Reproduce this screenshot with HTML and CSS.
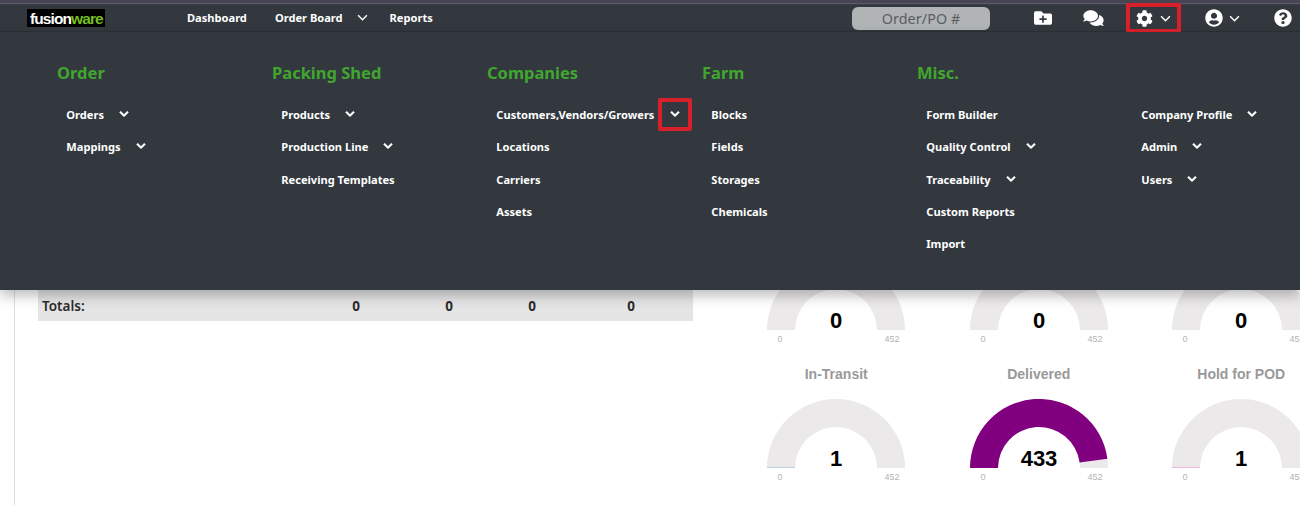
FILE: index.html
```html
<!DOCTYPE html>
<html lang="en">
<head>
<meta charset="utf-8">
<title>Fusionware</title>
<link rel="stylesheet" href="styles.css">
</head>
<body>
<svg class="defs" width="0" height="0" aria-hidden="true">
  <symbol id="chev" viewBox="0 0 448 512"><path d="M207.029 381.476L12.686 187.132c-9.373-9.373-9.373-24.569 0-33.941l22.667-22.667c9.357-9.357 24.522-9.375 33.901-.04L224 284.505l154.745-154.021c9.379-9.335 24.544-9.317 33.901.04l22.667 22.667c9.373 9.373 9.373 24.569 0 33.941L240.971 381.476c-9.373 9.372-24.569 9.372-33.942 0z"/></symbol>
  <symbol id="thin" viewBox="0 0 12 8"><path d="M1 1.500l5 5 5-5" fill="none" stroke="currentColor" stroke-width="1.700"/></symbol>
  <symbol id="cog" viewBox="0 0 512 512"><path d="M487.4 315.7l-42.6-24.6c4.3-23.2 4.3-47 0-70.2l42.6-24.6c4.9-2.8 7.1-8.6 5.5-14-11.1-35.6-30-67.8-54.7-94.6-3.8-4.1-10-5.1-14.8-2.3L380.8 110c-17.9-15.4-38.5-27.3-60.8-35.1V25.8c0-5.6-3.9-10.5-9.4-11.7-36.7-8.2-74.3-7.8-109.2 0-5.5 1.2-9.4 6.1-9.4 11.7V75c-22.2 7.9-42.8 19.8-60.8 35.1L88.7 85.5c-4.9-2.8-11-1.9-14.8 2.3-24.7 26.7-43.6 58.9-54.7 94.6-1.7 5.4.6 11.2 5.5 14L67.3 221c-4.3 23.2-4.3 47 0 70.2l-42.6 24.6c-4.9 2.8-7.1 8.6-5.5 14 11.1 35.6 30 67.8 54.7 94.6 3.8 4.1 10 5.1 14.8 2.3l42.6-24.6c17.9 15.4 38.5 27.3 60.8 35.1v49.2c0 5.6 3.9 10.5 9.4 11.7 36.7 8.2 74.3 7.8 109.2 0 5.5-1.2 9.4-6.1 9.4-11.7v-49.2c22.2-7.9 42.8-19.8 60.8-35.1l42.6 24.6c4.9 2.8 11 1.9 14.8-2.3 24.7-26.7 43.6-58.9 54.7-94.6 1.5-5.5-.7-11.3-5.6-14.1zM256 336c-44.1 0-80-35.9-80-80s35.9-80 80-80 80 35.9 80 80-35.9 80-80 80z"/></symbol>
</svg>

<header class="topbar">
  <div class="logo">fusion<span class="logo-accent">ware</span></div>
  <nav class="mainnav">
    <a class="navlink nav-dash">Dashboard</a>
    <a class="navlink nav-board">Order Board<svg class="thin nav-board-chev"><use href="#thin"/></svg></a>
    <a class="navlink">Reports</a>
  </nav>
  <div class="search">Order/PO #</div>
  <div class="tools">
    <svg class="tool tool-folder" viewBox="0 0 512 512"><path d="M464,128H272L208,64H48A48,48,0,0,0,0,112V400a48,48,0,0,0,48,48H464a48,48,0,0,0,48-48V176A48,48,0,0,0,464,128ZM359.5,296a16,16,0,0,1-16,16h-64v64a16,16,0,0,1-16,16h-16a16,16,0,0,1-16-16V312h-64a16,16,0,0,1-16-16V280a16,16,0,0,1,16-16h64V200a16,16,0,0,1,16-16h16a16,16,0,0,1,16,16v64h64a16,16,0,0,1,16,16Z"/></svg>
    <svg class="tool tool-comments" viewBox="0 0 576 512"><path d="M416 192c0-88.4-93.1-160-208-160S0 103.6 0 192c0 34.3 14.1 65.9 38 92-13.4 30.2-35.5 54.2-35.8 54.5-2.2 2.3-2.8 5.7-1.5 8.7S4.8 352 8 352c36.6 0 66.9-12.3 88.7-25 32.2 15.7 70.3 25 111.3 25 114.9 0 208-71.6 208-160zm122 220c23.9-26 38-57.7 38-92 0-66.9-53.5-124.2-129.3-148.1.9 6.6 1.3 13.3 1.3 20.1 0 105.9-107.7 192-240 192-10.8 0-21.3-.8-31.7-1.9C207.8 439.6 281.8 480 368 480c41 0 79.1-9.2 111.3-25 21.8 12.7 52.1 25 88.7 25 3.2 0 6.1-1.9 7.3-4.8 1.3-2.9.7-6.3-1.5-8.7-.3-.3-22.4-24.2-35.8-54.5z"/></svg>
    <div class="tool-settings">
      <svg class="tool tool-cog"><use href="#cog"/></svg>
      <svg class="thin"><use href="#thin"/></svg>
    </div>
    <div class="tool-user">
      <svg class="tool tool-usericon" viewBox="0 0 496 512"><path d="M248 8C111 8 0 119 0 256s111 248 248 248 248-111 248-248S385 8 248 8zm0 96c48.6 0 88 39.4 88 88s-39.4 88-88 88-88-39.4-88-88 39.4-88 88-88zm0 344c-58.7 0-111.3-26.6-146.5-68.2 18.8-35.4 55.6-59.8 98.5-59.8 2.4 0 4.8.4 7.1 1.1 13 4.2 26.6 6.9 40.9 6.9 14.3 0 28-2.7 40.9-6.9 2.3-.7 4.7-1.1 7.1-1.1 42.9 0 79.7 24.4 98.5 59.8C359.3 421.4 306.7 448 248 448z"/></svg>
      <svg class="thin"><use href="#thin"/></svg>
    </div>
    <svg class="tool tool-help" viewBox="0 0 512 512"><path d="M504 256c0 136.997-111.043 248-248 248S8 392.997 8 256C8 119.083 119.043 8 256 8s248 111.083 248 248zM262.655 90c-54.497 0-89.255 22.957-116.549 63.758-3.536 5.286-2.353 12.415 2.715 16.258l34.699 26.31c5.205 3.947 12.621 3.008 16.665-2.122 17.864-22.658 30.113-35.797 57.303-35.797 20.429 0 45.698 13.148 45.698 32.958 0 14.976-12.363 22.667-32.534 33.976C247.128 238.528 216 254.941 216 296v4c0 6.627 5.373 12 12 12h56c6.627 0 12-5.373 12-12v-1.333c0-28.462 83.186-29.647 83.186-106.667 0-58.002-60.165-102-116.531-102zM256 338c-25.365 0-46 20.635-46 46 0 25.364 20.635 46 46 46s46-20.636 46-46c0-25.365-20.635-46-46-46z"/></svg>
  </div>
</header>

<section class="megamenu">
  <div class="menucol">
    <h2>Order</h2>
    <ul>
      <li>Orders<svg class="chev"><use href="#chev"/></svg></li>
      <li>Mappings<svg class="chev"><use href="#chev"/></svg></li>
    </ul>
  </div>
  <div class="menucol">
    <h2>Packing Shed</h2>
    <ul>
      <li>Products<svg class="chev"><use href="#chev"/></svg></li>
      <li>Production Line<svg class="chev"><use href="#chev"/></svg></li>
      <li>Receiving Templates</li>
    </ul>
  </div>
  <div class="menucol">
    <h2>Companies</h2>
    <ul>
      <li>Customers,Vendors/Growers<span class="redbox"><svg class="chev chev-boxed"><use href="#chev"/></svg></span></li>
      <li>Locations</li>
      <li>Carriers</li>
      <li>Assets</li>
    </ul>
  </div>
  <div class="menucol">
    <h2>Farm</h2>
    <ul>
      <li>Blocks</li>
      <li>Fields</li>
      <li>Storages</li>
      <li>Chemicals</li>
    </ul>
  </div>
  <div class="menucol">
    <h2>Misc.</h2>
    <ul>
      <li>Form Builder</li>
      <li>Quality Control<svg class="chev"><use href="#chev"/></svg></li>
      <li>Traceability<svg class="chev"><use href="#chev"/></svg></li>
      <li>Custom Reports</li>
      <li>Import</li>
    </ul>
  </div>
  <div class="menucol">
    <h2 class="blank">&nbsp;</h2>
    <ul>
      <li>Company Profile<svg class="chev"><use href="#chev"/></svg></li>
      <li>Admin<svg class="chev"><use href="#chev"/></svg></li>
      <li>Users<svg class="chev"><use href="#chev"/></svg></li>
    </ul>
  </div>
</section>

<main class="content">
  <section class="leftpanel">
    <div class="totals">
      <span class="totals-label">Totals:</span>
      <span class="totals-num n1">0</span>
      <span class="totals-num n2">0</span>
      <span class="totals-num n3">0</span>
      <span class="totals-num n4">0</span>
    </div>
  </section>
  <section class="gauges">
    <div class="gauge">
      <div class="gauge-title">&nbsp;</div>
      <svg class="gauge-svg" viewBox="0 0 140 85"><path class="arc" d="M1 69a69 69 0 0 1 138 0h-28a41 41 0 0 0-82 0z"/><text class="val" x="70" y="67">0</text><text class="lim" x="14" y="81">0</text><text class="lim" x="126" y="81">452</text></svg>
    </div>
    <div class="gauge">
      <div class="gauge-title">&nbsp;</div>
      <svg class="gauge-svg" viewBox="0 0 140 85"><path class="arc" d="M1 69a69 69 0 0 1 138 0h-28a41 41 0 0 0-82 0z"/><text class="val" x="70" y="67">0</text><text class="lim" x="14" y="81">0</text><text class="lim" x="126" y="81">452</text></svg>
    </div>
    <div class="gauge">
      <div class="gauge-title">&nbsp;</div>
      <svg class="gauge-svg" viewBox="0 0 140 85"><path class="arc" d="M1 69a69 69 0 0 1 138 0h-28a41 41 0 0 0-82 0z"/><text class="val" x="70" y="67">0</text><text class="lim" x="14" y="81">0</text><text class="lim" x="126" y="81">452</text></svg>
    </div>
    <div class="gauge">
      <div class="gauge-title">In-Transit</div>
      <svg class="gauge-svg" viewBox="0 0 140 85"><path class="arc" d="M1 69a69 69 0 0 1 138 0h-28a41 41 0 0 0-82 0z"/><path class="sliver-blue" d="M1 69h28v-.7h-28z"/><text class="val" x="70" y="67">1</text><text class="lim" x="14" y="81">0</text><text class="lim" x="126" y="81">452</text></svg>
    </div>
    <div class="gauge">
      <div class="gauge-title">Delivered</div>
      <svg class="gauge-svg" viewBox="0 0 140 85"><path class="arc" d="M1 69a69 69 0 0 1 138 0h-28a41 41 0 0 0-82 0z"/><path class="arc-purple" d="M1 69a69 69 0 0 1 137.400-9.130l-27.760 3.710a41 41 0 0 0-81.640 5.420z"/><text class="val" x="70" y="67">433</text><text class="lim" x="14" y="81">0</text><text class="lim" x="126" y="81">452</text></svg>
    </div>
    <div class="gauge">
      <div class="gauge-title">Hold for POD</div>
      <svg class="gauge-svg" viewBox="0 0 140 85"><path class="arc" d="M1 69a69 69 0 0 1 138 0h-28a41 41 0 0 0-82 0z"/><path class="sliver-pink" d="M1 69h28v-.8h-28z"/><text class="val" x="70" y="67">1</text><text class="lim" x="14" y="81">0</text><text class="lim" x="126" y="81">452</text></svg>
    </div>
  </section>
</main>
</body>
</html>
```

FILE: styles.css
```css
* { box-sizing: border-box; }
html, body { margin: 0; padding: 0; }
body {
  width: 1300px;
  height: 505px;
  overflow: hidden;
  background: #fff;
  font-family: "Noto Sans", "Open Sans", sans-serif;
  position: relative;
}
.defs { position: absolute; }

.topbar {
  height: 32px;
  background: linear-gradient(#474554 0 3px, #5c5a68 3px 4px, #3a3d45 4px 5px, #32383e 5px);
  padding-top: 5px;
  border-bottom: 1px solid #2b3035;
  display: flex;
  align-items: center;
  color: #fff;
  padding-left: 27px;
  position: relative;
}
.logo {
  width: 78px;
  height: 18px;
  background: #000;
  color: #fff;
  font-family: "Liberation Sans", sans-serif;
  font-weight: 700;
  font-size: 15.500px;
  line-height: 19px;
  letter-spacing: -0.900px;
  padding-left: 3px;
  white-space: nowrap;
}
.logo-accent { color: #76bc21; }
.mainnav {
  display: flex;
  align-items: center;
  margin: -2px 0 0 82px;
  width: 665px;
}
.navlink {
  font-size: 11.100px;
  font-weight: 700;
  color: #fff;
  display: flex;
  align-items: center;
  white-space: nowrap;
}
.nav-dash { margin-right: 28px; }
.nav-board { margin-right: 22px; }
.nav-board-chev { margin-left: 14px; }
.thin { width: 11px; height: 7px; color: #fff; display: block; flex: none; }
.search {
  width: 138px;
  height: 23px;
  background: #b0b4b5;
  border-radius: 6px;
  color: #595d60;
  font-size: 14.300px;
  letter-spacing: 0.100px;
  line-height: 23px;
  text-align: center;
}
.tools {
  display: flex;
  align-items: center;
  margin-left: 44px;
}
.tool { fill: #fff; display: block; flex: none; }
.tool-folder { width: 18px; height: 18px; margin-right: 31px; }
.tool-comments { width: 21px; height: 18px; margin-right: 22px; }
.tool-settings {
  width: 55px;
  height: 30px;
  border: 4px solid #d8202a;
  border-radius: 1px;
  display: flex;
  align-items: center;
  gap: 7px;
  padding-left: 6px;
  margin-right: 24px;
}
.tool-cog { width: 17px; height: 17px; }
.tool-user {
  display: flex;
  align-items: center;
  gap: 6px;
  margin-right: 34px;
}
.tool-usericon { width: 18px; height: 18px; }
.tool-help { width: 18px; height: 18px; }

.megamenu {
  position: absolute;
  top: 32px;
  left: 0;
  width: 1300px;
  height: 258px;
  background: #32383e;
  box-shadow: 0 6px 12px rgba(0, 0, 0, 0.25);
  display: flex;
  padding: 30px 0 0 57px;
  z-index: 2;
  color: #fff;
}
.menucol { width: 215px; flex: none; }
.menucol h2 {
  margin: 0;
  height: 21px;
  font-size: 16.500px;
  line-height: 21px;
  font-weight: 700;
  color: #41a62e;
  white-space: nowrap;
}
.menucol ul {
  list-style: none;
  margin: 22px 0 0;
  padding: 0 0 0 9.300px;
}
.menucol li {
  height: 32.300px;
  font-size: 11.100px;
  font-weight: 700;
  line-height: 20px;
  display: flex;
  align-items: flex-start;
  white-space: nowrap;
}
.chev {
  width: 10px;
  height: 10px;
  fill: #fff;
  stroke: #fff;
  stroke-width: 30;
  margin: 4px 0 0 15px;
  flex: none;
}
.redbox {
  width: 34px;
  height: 33px;
  border: 4px solid #d8202a;
  border-radius: 2px;
  margin: -7px 0 0 4px;
  display: flex;
  justify-content: center;
  align-items: center;
  flex: none;
}
.chev-boxed { margin: -2px 0 0; }

.content {
  display: flex;
  padding-top: 194px;
  height: 473px;
  overflow: hidden;
}
.leftpanel {
  width: 766px;
  margin-left: 14px;
  height: 279px;
  border-left: 1px solid #e0e0e0;
  padding: 64px 0 0 23px;
  flex: none;
}
.totals {
  width: 655px;
  height: 31px;
  background: #e5e5e5;
  display: flex;
  align-items: center;
  font-size: 13.500px;
  font-weight: 600;
  color: #2b2b2b;
}
.totals-label { padding-left: 4px; width: 314px; }
.totals-num { text-align: center; width: 8px; font-weight: 700; font-size: 13.500px; }
.n2 { margin-left: 85px; }
.n3 { margin-left: 75px; }
.n4 { margin-left: 91px; }

.gauges {
  display: grid;
  grid-template-columns: repeat(3, 202.500px);
  grid-auto-rows: 138px;
  margin-left: -45px;
  flex: none;
}
.gauge { display: flex; flex-direction: column; align-items: center; }
.gauge-title {
  height: 20px;
  font-family: "Liberation Sans", sans-serif;
  font-weight: 700;
  font-size: 14px;
  line-height: 20px;
  color: #999;
  margin-bottom: 15px;
  white-space: nowrap;
}
.gauge-svg { width: 140px; height: 85px; display: block; flex: none; }
.arc { fill: #ebe9ea; }
.arc-purple { fill: #800080; }
.sliver-blue { fill: #a9c4dd; }
.sliver-pink { fill: #eda5e6; }
.val {
  font-family: "Liberation Sans", sans-serif;
  font-weight: 700;
  font-size: 22px;
  fill: #000;
  text-anchor: middle;
}
.lim {
  font-family: "Liberation Sans", sans-serif;
  font-size: 9px;
  fill: #b3b3b3;
  text-anchor: middle;
}
```
